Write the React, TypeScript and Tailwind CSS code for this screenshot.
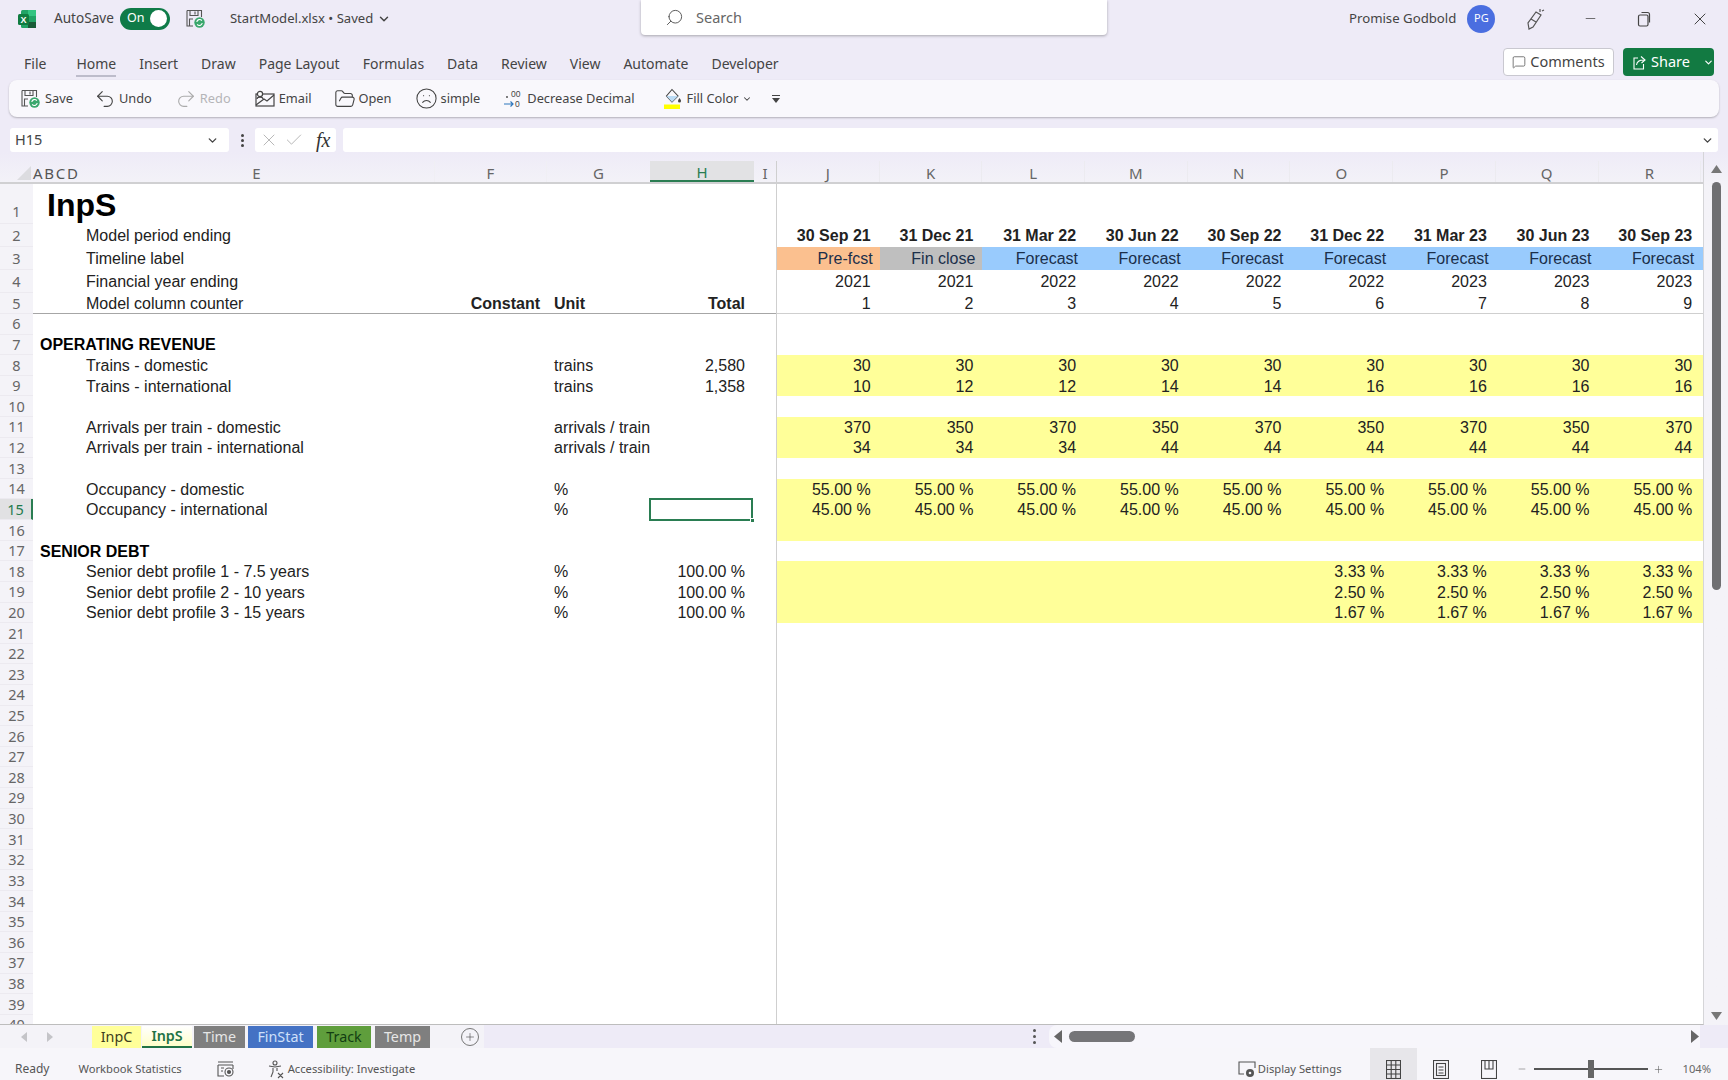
import React from 'react';
import { Search, X, Check, ChevronDown, Minus, Undo2, Redo2, FolderOpen, Frown, MessageSquare, Plus } from 'lucide-react';

type RowData = {
    n: number;
    h?: string;
    title?: string;
    section?: string;
    label?: string;
    constant?: string;
    unit?: string;
    total?: string;
    totalBold?: boolean;
    cells?: string[];
    fills?: string[];
    fill?: string;
    bold?: boolean;
    rule?: boolean;
    textColor?: string;
};

const YELLOW = 'bg-[#ffff99]';
const FORECAST = 'bg-[#99cbfd]';
const same = (v: string) => Array(9).fill(v) as string[];
const debtCells = (v: string) => ['', '', '', '', '', v, v, v, v];

const columns = ['J', 'K', 'L', 'M', 'N', 'O', 'P', 'Q', 'R'];

const rows: RowData[] = [
    { n: 1, h: 'h-[40px]', title: 'InpS' },
    {
        n: 2, h: 'h-[23px]', label: 'Model period ending', bold: true,
        cells: ['30 Sep 21', '31 Dec 21', '31 Mar 22', '30 Jun 22', '30 Sep 22', '31 Dec 22', '31 Mar 23', '30 Jun 23', '30 Sep 23'],
    },
    {
        n: 3, h: 'h-[23px]', label: 'Timeline label', textColor: 'text-[#1b2f4a]',
        cells: ['Pre-fcst', 'Fin close', ...Array(7).fill('Forecast')],
        fills: ['bg-[#fbc08f]', 'bg-[#bfbfbf]', ...Array(7).fill(FORECAST)],
    },
    { n: 4, h: 'h-[23px]', label: 'Financial year ending', cells: ['2021', '2021', '2022', '2022', '2022', '2022', '2023', '2023', '2023'] },
    { n: 5, h: 'h-[21px]', label: 'Model column counter', constant: 'Constant', unit: 'Unit', total: 'Total', totalBold: true, rule: true, cells: ['1', '2', '3', '4', '5', '6', '7', '8', '9'] },
    { n: 6 },
    { n: 7, section: 'OPERATING REVENUE' },
    { n: 8, label: 'Trains - domestic', unit: 'trains', total: '2,580', fill: YELLOW, cells: same('30') },
    { n: 9, label: 'Trains - international', unit: 'trains', total: '1,358', fill: YELLOW, cells: ['10', '12', '12', '14', '14', '16', '16', '16', '16'] },
    { n: 10 },
    { n: 11, label: 'Arrivals per train - domestic', unit: 'arrivals / train', fill: YELLOW, cells: ['370', '350', '370', '350', '370', '350', '370', '350', '370'] },
    { n: 12, label: 'Arrivals per train - international', unit: 'arrivals / train', fill: YELLOW, cells: ['34', '34', '34', '44', '44', '44', '44', '44', '44'] },
    { n: 13 },
    { n: 14, label: 'Occupancy - domestic', unit: '%', fill: YELLOW, cells: same('55.00 %') },
    { n: 15, label: 'Occupancy - international', unit: '%', fill: YELLOW, cells: same('45.00 %') },
    { n: 16, fill: YELLOW },
    { n: 17, section: 'SENIOR DEBT' },
    { n: 18, label: 'Senior debt profile 1 - 7.5 years', unit: '%', total: '100.00 %', fill: YELLOW, cells: debtCells('3.33 %') },
    { n: 19, label: 'Senior debt profile 2 - 10 years', unit: '%', total: '100.00 %', fill: YELLOW, cells: debtCells('2.50 %') },
    { n: 20, label: 'Senior debt profile 3 - 15 years', unit: '%', total: '100.00 %', fill: YELLOW, cells: debtCells('1.67 %') },
    ...Array.from({ length: 20 }, (_, i) => ({ n: 21 + i })),
];

function ExcelIcon() {
    return (
        <svg width="20" height="20" viewBox="0 0 20 20">
            <rect x="4" y="1" width="15" height="18" rx="1.5" fill="#21a366" />
            <rect x="11" y="1" width="8" height="6" fill="#33c481" />
            <rect x="11" y="13" width="8" height="6" fill="#185c37" />
            <rect x="1" y="5" width="11" height="11" rx="1.5" fill="#107c41" />
            <text x="6.5" y="13.5" textAnchor="middle" fontSize="9" fontWeight="700" fill="#fff" fontFamily="Liberation Sans">X</text>
        </svg>
    );
}

function SaveIcon({ size = 21 }: { size?: number }) {
    return (
        <svg width={size} height={size} viewBox="0 0 21 21" fill="none">
            <path d="M2 2.5h14.5v6.5M8 18H2V2.5M5 2.5v5h8v-5M10 3.5v3M4.5 18v-7H8" stroke="#555" strokeWidth="1.1" />
            <circle cx="14.5" cy="14.5" r="5.2" fill="#3aa76d" />
            <path d="M11.8 14a2.8 2.8 0 0 1 5-1.4M17.2 15a2.8 2.8 0 0 1-5 1.4" stroke="#fff" strokeWidth="1.1" />
        </svg>
    );
}

function EmailIcon() {
    return (
        <svg width="20" height="18" viewBox="0 0 20 18" fill="none" stroke="#444" strokeWidth="1.2">
            <rect x="1" y="4" width="18" height="12" />
            <path d="M1 15l8-6 3 2 7-6" />
            <circle cx="5" cy="4" r="2.6" fill="#fff" />
            <path d="M2 9c.5-2.5 5.500-2.500 6 0" />
        </svg>
    );
}

function DecreaseDecimalIcon() {
    return (
        <svg width="20" height="20" viewBox="0 0 20 20" fill="none">
            <text x="8" y="8" fontSize="8.500" fill="#444" fontFamily="Liberation Sans">00</text>
            <text x="12" y="18" fontSize="8.500" fill="#444" fontFamily="Liberation Sans">0</text>
            <circle cx="4" cy="8" r="0.9" fill="#444" />
            <path d="M1 15h9M7.500 12.500l2.500 2.500-2.500 2.500" stroke="#2f77bc" strokeWidth="1.2" />
        </svg>
    );
}

function FillColorIcon() {
    return (
        <svg width="20" height="22" viewBox="0 0 20 22" fill="none">
            <path d="M9 1.500l6 6.500-6 6-5.500-6z" stroke="#444" strokeWidth="1.100" />
            <path d="M3.500 8h11.500l-6 6z" fill="#bcdcf5" />
            <path d="M16.500 10c1 1.500 1.500 2.300 1.500 3a1.500 1.500 0 0 1-3 0c0-.7.5-1.500 1.500-3z" fill="#444" />
            <rect x="1" y="16.500" width="16" height="4.500" fill="#ffff00" />
        </svg>
    );
}

function ToolButton({ icon, label, muted, className }: { icon: React.ReactNode; label: string; muted?: boolean; className: string }) {
    return (
        <div className={`flex items-center gap-[4px] ${className}`}>
            {icon}
            <span className={`text-[12.8px] ${muted ? 'text-[#b5b5b8]' : 'text-[#444]'}`}>{label}</span>
        </div>
    );
}

function Row({ row }: { row: RowData }) {
    const active = row.n === 15;
    const ruled = row.rule ? 'border-b border-[#a6a6a6]' : '';
    // rows 5 and down sit a touch lower in their cells than the header rows
    const nudge = row.h && !row.rule ? '' : 'pt-px';
    return (
        <div className={`flex shrink-0 ${row.h ?? 'h-[20.62px]'}`}>
            <div className={`w-[33px] shrink-0 flex items-center justify-center pt-px text-[14.5px] border-b border-[#eceaf0] ${active ? 'bg-[#e1e1e3] text-[#1f7a4d] border-r-2 border-r-[#2a7d52]' : 'bg-[#f4f3f8] text-[#666]'}`}>
                <span className={row.n === 1 ? 'pt-[16px]' : ''}>{row.n}</span>
            </div>
            <div className={`relative w-[743px] shrink-0 flex items-center bg-white text-[16px] text-[#222] font-['Liberation_Sans'] ${nudge} ${ruled}`}>
                <div className={`w-[400px] shrink-0 whitespace-nowrap ${row.title ? 'pt-[3px]' : ''}`}>
                    {row.title && <span className="pl-[14px] text-[32px] leading-none font-bold text-black">{row.title}</span>}
                    {row.section && <span className="pl-[7px] font-bold text-black">{row.section}</span>}
                    {row.label && <span className="pl-[53px]">{row.label}</span>}
                </div>
                <div className="w-[107px] shrink-0 text-right font-bold">{row.constant}</div>
                <div className={`w-[110px] shrink-0 ml-[14px] whitespace-nowrap ${row.constant ? 'font-bold' : ''}`}>{row.unit}</div>
                <div className={`w-[81px] shrink-0 text-right whitespace-nowrap ${row.totalBold ? 'font-bold' : ''}`}>{row.total}</div>
                {active && (
                    <div className="absolute z-10 left-[616px] top-[-1px] w-[104px] h-[23px] border-2 border-[#2a7d52]">
                        <div className="absolute right-[-4px] bottom-[-4px] w-[5px] h-[5px] bg-[#2a7d52] border border-white" />
                    </div>
                )}
            </div>
            <div className={`flex w-[928px] shrink-0 border-l border-[#cfcfcf] text-[16px] font-['Liberation_Sans'] ${row.fill ?? 'bg-white'} ${ruled}`}>
                {row.cells?.map((cell, i) => (
                    <div
                        key={i}
                        className={`w-[102.7px] shrink-0 flex items-center justify-end whitespace-nowrap ${nudge} ${row.fills ? 'pr-[7px]' : 'pr-[9px]'} ${row.bold ? 'font-bold' : ''} ${row.textColor ?? 'text-[#222]'} ${row.fills ? row.fills[i] : ''}`}
                    >
                        {cell}
                    </div>
                ))}
                {row.fills && <div className={`flex-1 ${FORECAST}`} />}
            </div>
        </div>
    );
}

function SheetTab({ label, className }: { label: string; className: string }) {
    return <div className={`h-[22px] flex items-center justify-center text-[14.3px] ${className}`}>{label}</div>;
}

export default function App() {
    return (
        <div className="w-[1728px] h-[1080px] overflow-hidden flex flex-col bg-[#eeebf7] font-['Noto_Sans',sans-serif] text-[#444]">
            {/* Title bar */}
            <div className="h-[37px] shrink-0 flex items-start">
                <div className="w-[641px] shrink-0 h-[37px] flex items-center pl-[17px]">
                    <ExcelIcon />
                    <span className="ml-[17px] text-[13.6px]">AutoSave</span>
                    <div className="ml-[6px] w-[50px] h-[22px] rounded-full bg-[#0f7b48] flex items-center justify-between pl-[7px] pr-[3px]">
                        <span className="text-[12.5px] text-white">On</span>
                        <span className="w-[17px] h-[17px] rounded-full bg-white" />
                    </div>
                    <span className="ml-[15px]"><SaveIcon /></span>
                    <span className="ml-[24px] text-[13.1px] whitespace-nowrap">StartModel.xlsx • Saved</span>
                    <ChevronDown size={14} strokeWidth={2.5} className="ml-[4px]" />
                </div>
                <div className="w-[466px] shrink-0 h-[35px] bg-white rounded-b-[4px] shadow-[0_1px_3px_rgba(0,0,0,0.3)] flex items-center pl-[24px]">
                    <Search size={19} strokeWidth={1.2} className="-scale-x-100 text-[#555]" />
                    <span className="ml-[12px] text-[14.5px] text-[#666]">Search</span>
                </div>
                <div className="flex-1 h-[37px] flex items-center">
                    <span className="ml-[242px] text-[13.2px] whitespace-nowrap">Promise Godbold</span>
                    <span className="ml-[11px] w-[28px] h-[28px] rounded-full bg-[#4a6ee0] text-white text-[11px] flex items-center justify-center">PG</span>
                    <svg className="ml-[30px]" width="20" height="24" viewBox="0 0 20 24" fill="none" stroke="#555" strokeWidth="1.2">
                        <path d="M4 22l-1-6L11 5l5 3-8 12z" />
                        <path d="M6 12l5 3M15 2v3M17 4l2-1" />
                    </svg>
                    <Minus size={15} strokeWidth={1.2} className="ml-[38px]" />
                    <svg className="ml-[39px]" width="14" height="16" viewBox="0 0 14 16" fill="none" stroke="#444" strokeWidth="1.2">
                        <rect x="1.500" y="4" width="9.500" height="11" rx="1.500" />
                        <path d="M4.500 1.500h6a2 2 0 0 1 2 2v8" />
                    </svg>
                    <X size={20} strokeWidth={1.2} className="ml-[39px]" />
                </div>
            </div>

            {/* Ribbon tabs */}
            <div className="h-[43px] shrink-0 flex items-start pl-[24px] pr-[14px]">
                <div className="flex gap-[23px] pt-[16px] text-[14px] leading-[22px] whitespace-nowrap">
                    <span className="mr-[7px]">File</span>
                    <span className="relative">
                        Home
                        <span className="absolute left-0 right-0 top-[22px] h-[2px] bg-[#bdbccb]" />
                    </span>
                    <span>Insert</span>
                    <span>Draw</span>
                    <span>Page Layout</span>
                    <span>Formulas</span>
                    <span>Data</span>
                    <span>Review</span>
                    <span>View</span>
                    <span>Automate</span>
                    <span>Developer</span>
                </div>
                <div className="ml-auto mt-[11px] w-[111px] h-[28px] bg-white rounded-[4px] border border-[#c9c8d0] flex items-center justify-center gap-[4px] text-[14.5px]">
                    <MessageSquare size={14} strokeWidth={1.2} />
                    Comments
                </div>
                <div className="ml-[9px] mt-[11px] w-[91px] h-[28px] bg-[#127a42] rounded-[4px] text-white flex items-center pl-[9px] text-[14.5px]">
                    <svg width="15" height="15" viewBox="0 0 15 15" fill="none" stroke="#fff" strokeWidth="1.100">
                        <path d="M6 3H2v11h9.500V9M4.500 10c.5-3.500 3-5 7-5M9 1.500L13 5 9.500 8" />
                    </svg>
                    <span className="ml-[4px]">Share</span>
                    <ChevronDown size={11} strokeWidth={2.5} className="ml-[13px]" />
                </div>
            </div>

            {/* Quick access toolbar */}
            <div className="h-[37px] shrink-0 mx-[9px] rounded-lg bg-[#f9f8fc] shadow-[0_1px_2px_rgba(0,0,0,0.25)] flex items-center">
                <ToolButton className="ml-[11px]" icon={<SaveIcon />} label="Save" />
                <ToolButton className="ml-[23px]" icon={<Undo2 size={22} strokeWidth={1.2} className="-mx-[1.5px] text-[#444]" />} label="Undo" />
                <ToolButton muted className="ml-[25px]" icon={<Redo2 size={22} strokeWidth={1.2} className="-mx-[1.5px] text-[#aaa]" />} label="Redo" />
                <ToolButton className="ml-[24px]" icon={<EmailIcon />} label="Email" />
                <ToolButton className="ml-[24px]" icon={<FolderOpen size={22} strokeWidth={1.2} className="-mx-[1.5px] text-[#444]" />} label="Open" />
                <ToolButton className="ml-[25px]" icon={<Frown size={23} strokeWidth={1.1} className="-mx-[1.5px] text-[#444]" />} label="simple" />
                <ToolButton className="ml-[23px]" icon={<DecreaseDecimalIcon />} label="Decrease Decimal" />
                <ToolButton className="ml-[28px]" icon={<FillColorIcon />} label="Fill Color" />
                <ChevronDown size={10} strokeWidth={2.5} className="ml-[3px]" />
                <div className="ml-[20px] w-[8px] flex flex-col items-center gap-[2px]">
                    <div className="w-[8px] h-px bg-[#444]" />
                    <svg width="8" height="5" viewBox="0 0 8 5"><path d="M0 0h8L4 5z" fill="#444" /></svg>
                </div>
            </div>

            {/* Formula bar */}
            <div className="h-[24px] shrink-0 mt-[11px] flex pl-[10px] pr-[10px]">
                <div className="w-[219px] bg-white rounded-[3px] flex items-center justify-between pl-[5px] pr-[10px] text-[14.5px]">
                    H15
                    <ChevronDown size={13} strokeWidth={2.5} />
                </div>
                <div className="w-[26px] flex flex-col items-center justify-center gap-[2px]">
                    <span className="w-[3px] h-[3px] rounded-full bg-[#444]" />
                    <span className="w-[3px] h-[3px] rounded-full bg-[#444]" />
                    <span className="w-[3px] h-[3px] rounded-full bg-[#444]" />
                </div>
                <div className="w-[81px] bg-white rounded-[3px] flex items-center pl-[4px] text-[#aaa]">
                    <X size={20} strokeWidth={1} />
                    <Check size={20} strokeWidth={1} className="ml-[5px]" />
                    <span className="ml-[12px] text-[20px] italic font-['Liberation_Serif'] text-[#333]">fx</span>
                </div>
                <div className="flex-1 ml-[7px] bg-white rounded-[3px] flex items-center justify-end pr-[4px]">
                    <ChevronDown size={13} strokeWidth={2.5} />
                </div>
            </div>

            {/* Grid */}
            <div className="h-[873px] shrink-0 flex bg-gradient-to-b from-[#eeebf7] to-[#f4f3f8] to-[4%]">
                <div className="w-[1704px] shrink-0 flex flex-col overflow-hidden border-b border-[#bdbdbd] border-r border-r-[#d5d5d8]">
                    <div className="h-[32px] shrink-0 pt-[9px] flex text-[15px] text-[#666] border-b-2 border-[#d0d0d2]">
                        <div className="relative w-[33px] shrink-0">
                            <div className="absolute right-[2px] bottom-[2px] w-0 h-0 border-l-[14px] border-l-transparent border-b-[14px] border-b-[#dcdce0]" />
                        </div>
                        <div className="w-[46px] shrink-0 flex items-center justify-between whitespace-nowrap pt-[3px] pr-[1px] text-[#555]">
                            <span>A</span><span>B</span><span>C</span><span>D</span>
                        </div>
                        <div className="w-[356px] shrink-0 flex items-center justify-center pt-[3px] border-r border-[#f0eff4]">E</div>
                        <div className="w-[112px] shrink-0 flex items-center justify-center pt-[3px] border-r border-[#f0eff4]">F</div>
                        <div className="w-[103px] shrink-0 flex items-center justify-center pt-[3px]">G</div>
                        <div className="w-[104px] shrink-0 flex items-center justify-center pt-[3px] bg-[#e2e2e4] text-[#2a7d52] border-b-2 border-[#2a7d52]">H</div>
                        <div className="w-[22px] shrink-0 flex items-center justify-center pt-[3px]">I</div>
                        <div className="flex border-l border-[#cfcfcf]">
                            {columns.map(col => (
                                <div key={col} className="w-[102.7px] shrink-0 flex items-center justify-center pt-[3px] border-r border-[#ecebf0]">{col}</div>
                            ))}
                        </div>
                    </div>
                    {rows.map(row => <Row key={row.n} row={row} />)}
                </div>
                <div className="flex-1 flex flex-col items-center pt-[13px]">
                    <svg width="11" height="8" viewBox="0 0 11 8"><path d="M0 8h11L5.500 0z" fill="#777" /></svg>
                    <div className="mt-[9px] w-[9px] h-[408px] rounded-full bg-[#6f6f72]" />
                    <div className="flex-1" />
                    <svg className="mb-[5px]" width="11" height="8" viewBox="0 0 11 8"><path d="M0 0h11L5.500 8z" fill="#777" /></svg>
                </div>
            </div>

            {/* Sheet tabs */}
            <div className="h-[23px] shrink-0 flex items-center">
                <div className="w-[484px] shrink-0 h-full flex items-center pl-[12px] bg-[#f4f3f8]">
                    <div className="w-[80px] flex items-center">
                        <svg className="ml-[9px]" width="6" height="10" viewBox="0 0 6 10"><path d="M6 0v10L0 5z" fill="#c4c4c8" /></svg>
                        <svg className="ml-[20px]" width="6" height="10" viewBox="0 0 6 10"><path d="M0 0v10l6-5z" fill="#c4c4c8" /></svg>
                    </div>
                    <SheetTab label="InpC" className="w-[49px] bg-[#ffff99] text-[#3c3c20]" />
                    <SheetTab label="InpS" className="w-[50px] ml-[1px] bg-gradient-to-b from-white to-[#ffffc8] font-semibold text-[#217346] border-b-2 border-[#217346]" />
                    <SheetTab label="Time" className="w-[51px] ml-[2px] bg-[#7f7f7f] text-[#e6e6e6]" />
                    <SheetTab label="FinStat" className="w-[65px] ml-[3px] bg-[#4472c4] text-[#cfe0fa]" />
                    <SheetTab label="Track" className="w-[54px] ml-[4px] bg-[#5f9e3c] text-[#123d12]" />
                    <SheetTab label="Temp" className="w-[55px] ml-[4px] bg-[#7f7f7f] text-[#e6e6e6]" />
                    <div className="ml-[31px] w-[18px] h-[18px] rounded-full border border-[#777] flex items-center justify-center">
                        <Plus size={12} strokeWidth={1.2} />
                    </div>
                </div>
                <div className="w-[553px] shrink-0 flex items-center justify-end pr-[1px]">
                    <div className="flex flex-col gap-[3px] items-center">
                        <span className="w-[3px] h-[3px] rounded-full bg-[#555]" />
                        <span className="w-[3px] h-[3px] rounded-full bg-[#555]" />
                        <span className="w-[3px] h-[3px] rounded-full bg-[#555]" />
                    </div>
                </div>
                <div className="w-[651px] shrink-0 ml-[12px] h-full flex items-center bg-[#f7f6fb] rounded-l-lg pl-[5px] pr-[1px]">
                    <svg width="8" height="13" viewBox="0 0 8 13"><path d="M8 0v13L0 6.500z" fill="#666" /></svg>
                    <div className="ml-[7px] w-[66px] h-[11px] rounded-full bg-[#757578]" />
                    <div className="flex-1" />
                    <svg width="8" height="13" viewBox="0 0 8 13"><path d="M0 0v13l8-6.500z" fill="#666" /></svg>
                </div>
            </div>

            {/* Status bar */}
            <div className="flex-1 flex bg-[#f7f6fa] text-[11.2px] text-[#555] whitespace-nowrap pr-[17px]">
                <div className="flex items-center pt-[10px]">
                    <span className="ml-[15px] text-[12px]">Ready</span>
                    <span className="ml-[29px]">Workbook Statistics</span>
                    <svg className="ml-[35px]" width="18" height="17" viewBox="0 0 18 17" fill="none" stroke="#555" strokeWidth="1.100">
                        <path d="M1 1h15M1 4h15M1 4v11h6M4 7h3M4 10h2" />
                        <path d="M16 4v4" />
                        <circle cx="12" cy="11" r="4" />
                        <circle cx="12" cy="11" r="1.500" fill="#555" />
                    </svg>
                    <svg className="ml-[33px]" width="17" height="19" viewBox="0 0 17 19" fill="none" stroke="#555" strokeWidth="1.100">
                        <circle cx="7" cy="3" r="2" />
                        <path d="M1 6l6 1 6-1M5 8v4l-2 5M9 8v3M10 13l5 5M15 13l-5 5" />
                    </svg>
                    <span className="ml-[3px]">Accessibility: Investigate</span>
                </div>
                <div className="ml-auto flex items-center pt-[10px]">
                    <svg width="19" height="19" viewBox="0 0 19 19" fill="none" stroke="#555" strokeWidth="1.100">
                        <path d="M6 14H1V2h16v6" />
                        <circle cx="12" cy="13" r="4" fill="#555" stroke="none" />
                        <circle cx="12" cy="13" r="1.300" fill="#f7f6fa" stroke="none" />
                    </svg>
                    <span className="ml-[1px]">Display Settings</span>
                </div>
                <div className="ml-[28px] w-[47px] bg-[#e7e6ea] flex items-center justify-center pt-[10px]">
                    <svg width="15" height="19" viewBox="0 0 15 19" fill="none" stroke="#444" strokeWidth="1.100">
                        <rect x="0.500" y="0.500" width="14" height="18" />
                        <path d="M5.200 0v19M9.800 0v19M0 5h15M0 9.500h15M0 14h15" />
                    </svg>
                </div>
                <div className="flex items-center pt-[10px]">
                    <svg className="ml-[16px]" width="16" height="19" viewBox="0 0 16 19" fill="none" stroke="#444" strokeWidth="1.100">
                        <rect x="0.500" y="0.500" width="15" height="18" />
                        <rect x="3.500" y="3.500" width="9" height="12" />
                        <path d="M5.500 7h5M5.500 10h5M5.500 13h5" />
                    </svg>
                    <svg className="ml-[32px]" width="16" height="19" viewBox="0 0 16 19" fill="none" stroke="#444" strokeWidth="1.100">
                        <rect x="0.500" y="0.500" width="15" height="18" />
                        <path d="M4 1v8h8V1M8 1v8" />
                    </svg>
                    <Minus size={10} strokeWidth={1.2} className="ml-[20px]" />
                    <div className="ml-[7px] relative w-[114px] h-[1.5px] bg-[#555]">
                        <div className="absolute left-[54px] top-[-8px] w-[6px] h-[18px] bg-[#666]" />
                    </div>
                    <Plus size={11} strokeWidth={1.2} className="ml-[5px]" />
                    <span className="ml-[19px] text-[#666]">104%</span>
                </div>
            </div>
        </div>
    );
}
